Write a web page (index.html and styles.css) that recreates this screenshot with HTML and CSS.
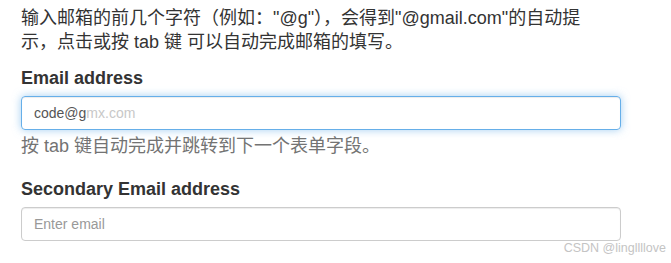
FILE: index.html
```html
<!DOCTYPE html>
<html lang="zh-CN">
<head>
  <meta charset="UTF-8">
  <meta name="viewport" content="width=device-width, initial-scale=1.0">
  <title>Email Autocomplete</title>
  <link rel="stylesheet" href="styles.css">
</head>
<body>
  <div class="Container">

    <p class="Intro">输入邮箱的前几个字符（例如："@g"），会得到"@gmail.com"的自动提示，点击或按 tab 键 可以自动完成邮箱的填写。</p>

    <div class="FormGroup">
      <label class="FormGroup_Label" for="email">Email address</label>
      <div class="Autocomplete">
        <span class="Autocomplete_Hint" aria-hidden="true"><span class="Autocomplete_Typed">code@g</span>mx.com</span>
        <input class="FormControl -focus" type="email" id="email" value="code@g">
      </div>
      <p class="HelpBlock">按 tab 键自动完成并跳转到下一个表单字段。</p>
    </div>

    <div class="FormGroup">
      <label class="FormGroup_Label" for="email2">Secondary Email address</label>
      <input class="FormControl" type="email" id="email2" placeholder="Enter email">
    </div>

  </div>

  <p class="Watermark">CSDN @lingllllove</p>
</body>
</html>
```

FILE: styles.css
```css
html {
  height: 100%;
}
body {
  margin: 0;
  height: 100%;
  position: relative;
  color: #333;
  background-color: #fff;
  font-family: "Liberation Sans", "Noto Sans CJK SC", sans-serif;
  font-size: 18px;
  line-height: 24px;
}

.Container {
  width: 600px;
  padding: 6px 0 0 21px;
}

.Intro {
  max-width: 570px;
  margin: 0 0 12px;
}

.FormGroup {
  margin-bottom: 19px;
}

.FormGroup_Label {
  display: block;
  margin-bottom: 6px;
  font-weight: bold;
}

/*
  入力欄（Bootstrap 3 の form-control 相当）
*/
.FormControl {
  --_border: #ccc;

  display: block;
  box-sizing: border-box;
  width: 100%;
  height: 34px;
  margin: 0;
  padding: 6px 12px;
  font-family: "Liberation Sans", sans-serif;
  font-size: 14px;
  line-height: 20px;
  color: #555;
  background-color: transparent;
  border: 1px solid var(--_border);
  border-radius: 4px;
  box-shadow: inset 0 1px 1px rgba(0, 0, 0, 0.075);
  outline: 0;
}
.FormControl::placeholder {
  color: #999;
}
.FormControl.-focus {
  --_border: #66afe9;
  box-shadow: inset 0 1px 1px rgba(0, 0, 0, 0.075), 0 0 8px rgba(102, 175, 233, 0.6);
}

/* 補完候補を入力欄の背面に重ねる */
.Autocomplete {
  position: relative;
}
.Autocomplete_Hint {
  position: absolute;
  top: 7px;
  left: 13px;
  font-family: "Liberation Sans", sans-serif;
  font-size: 14px;
  line-height: 20px;
  color: #c8c8c8;
  white-space: pre;
}
.Autocomplete_Typed {
  color: transparent;
}

.HelpBlock {
  margin: 4px 0 0;
  color: #737373;
}

.Watermark {
  position: absolute;
  right: 5px;
  bottom: 8px;
  margin: 0;
  font-family: "Liberation Sans", sans-serif;
  font-size: 12.5px;
  line-height: 14px;
  color: #c4c4c4;
}
```
